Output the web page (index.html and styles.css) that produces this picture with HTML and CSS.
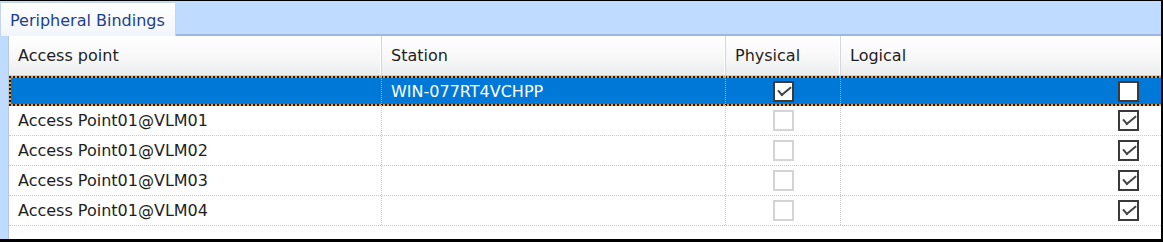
FILE: index.html
```html
<!DOCTYPE html>
<html lang="en">
<head>
    <meta charset="UTF-8">
    <title>Peripheral Bindings</title>
    <link rel="stylesheet" href="styles.css">
</head>
<body>
    <div class="panel">
        <div class="tab-strip">
            <div class="tab">Peripheral Bindings</div>
        </div>

        <div class="content">
            <div class="grid">
                <div class="grid-header">
                    <div class="head-cell">Access point</div>
                    <div class="head-cell">Station</div>
                    <div class="head-cell">Physical</div>
                    <div class="head-cell">Logical</div>
                </div>

                <div class="grid-row selected">
                    <div class="cell"></div>
                    <div class="cell">WIN-077RT4VCHPP</div>
                    <div class="cell center"><span class="check checked"></span></div>
                    <div class="cell right"><span class="check"></span></div>
                </div>
                <div class="grid-row">
                    <div class="cell">Access Point01@VLM01</div>
                    <div class="cell"></div>
                    <div class="cell center"><span class="check disabled"></span></div>
                    <div class="cell right"><span class="check checked"></span></div>
                </div>
                <div class="grid-row">
                    <div class="cell">Access Point01@VLM02</div>
                    <div class="cell"></div>
                    <div class="cell center"><span class="check disabled"></span></div>
                    <div class="cell right"><span class="check checked"></span></div>
                </div>
                <div class="grid-row">
                    <div class="cell">Access Point01@VLM03</div>
                    <div class="cell"></div>
                    <div class="cell center"><span class="check disabled"></span></div>
                    <div class="cell right"><span class="check checked"></span></div>
                </div>
                <div class="grid-row">
                    <div class="cell">Access Point01@VLM04</div>
                    <div class="cell"></div>
                    <div class="cell center"><span class="check disabled"></span></div>
                    <div class="cell right"><span class="check checked"></span></div>
                </div>
            </div>
        </div>
    </div>
</body>
</html>
```

FILE: styles.css
```css
:root {
    --strip-bg: #bfdbff;
    --strip-line: #99b8e4;
    --select-blue: #0078d7;
    --grid-line: #c9c9c9;
    --text: #1e1e1e;
}

* {
    margin: 0;
    padding: 0;
    box-sizing: border-box;
}

body {
    width: 1163px;
    height: 242px;
    overflow: hidden;
    font-family: "DejaVu Sans", Verdana, sans-serif;
    font-size: 16px;
    color: var(--text);
    background: #000;
}

.panel {
    width: 1161px;
    height: 239px;
    display: flex;
    flex-direction: column;
    background: var(--strip-bg);
}

/* tab strip */
.tab-strip {
    height: 36px;
    display: flex;
    align-items: flex-end;
    border-bottom: 2px solid var(--strip-line);
    border-top: 1px solid #000;
}

.tab {
    height: 34px;
    width: 176px;
    margin-bottom: -2px;
    padding: 8px 0 0 9px;
    color: #1f3f8f;
    background: linear-gradient(#ffffff, #f1f5fb);
    border: 1px solid #c6d6ea;
    border-bottom: none;
    border-top-right-radius: 2px;
}

/* grid */
.content {
    flex: 1;
    padding-left: 8px;
    display: flex;
}

.grid {
    flex: 1;
    background: #fff;
    border-left: 1px solid #b8c8dc;
}

.grid-header {
    display: grid;
    grid-template-columns: 373px 344px 115px 1fr;
    height: 40px;
    background: linear-gradient(#ffffff, #f7f7f7 60%, #eaeced);
    border-bottom: 1px solid #c3d3e3;
}

.head-cell {
    display: flex;
    align-items: center;
    padding-left: 9px;
    border-right: 1px solid #d4d8dd;
    box-shadow: inset -1px 0 0 #fff;
}

.head-cell:last-child {
    border-right: none;
}

.grid-row {
    display: grid;
    grid-template-columns: 373px 344px 115px 1fr;
    height: 30px;
    border-bottom: 1px dotted var(--grid-line);
}

.cell {
    display: flex;
    align-items: center;
    padding-left: 9px;
    border-right: 1px dotted var(--grid-line);
    white-space: nowrap;
}

.cell:last-child {
    border-right: none;
}

.cell.center {
    justify-content: center;
    padding-left: 0;
}

.cell.right {
    justify-content: flex-end;
    padding-right: 22px;
}

.grid-row.selected {
    color: #fff;
    border-bottom: none;
    background:
        repeating-linear-gradient(90deg, #1a1a1a 0 2px, #f0a030 2px 4px) top left / 100% 2px no-repeat,
        repeating-linear-gradient(90deg, #1a1a1a 0 2px, #f0a030 2px 4px) bottom left / 100% 2px no-repeat,
        repeating-linear-gradient(#1a1a1a 0 2px, #f0a030 2px 4px) top left / 2px 100% no-repeat,
        var(--select-blue);
}

.grid-row.selected .cell {
    border-right-color: #8dbbe6;
}

/* check boxes */
.check {
    display: block;
    width: 21px;
    height: 21px;
    border: 2px solid #3a3a3a;
    background: #fff;
    position: relative;
}

.check.disabled {
    border-color: #d4d4d4;
}

.check.checked::after {
    content: "";
    position: absolute;
    left: 3px;
    top: 3px;
    width: 11px;
    height: 5px;
    border-left: 2px solid #444;
    border-bottom: 2px solid #444;
    transform: rotate(-40deg);
}
```
